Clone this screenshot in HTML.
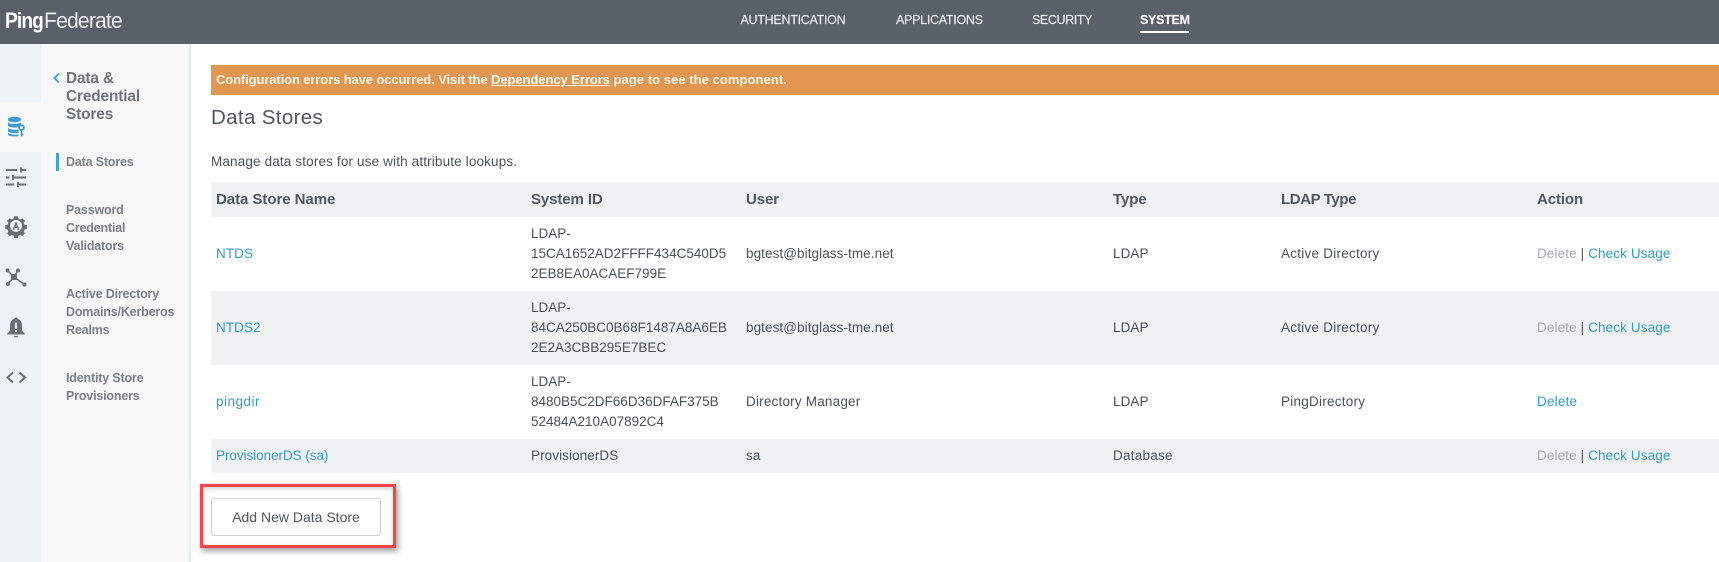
<!DOCTYPE html>
<html><head><meta charset="utf-8"><title>PingFederate Data Stores</title>
<style>
html,body{margin:0;padding:0;width:1719px;height:562px;overflow:hidden;background:#fff}
body{position:relative;font-family:"Liberation Sans",sans-serif;font-size:13.5px;color:#4b5158}
.a,.t{position:absolute;white-space:nowrap}
.t{line-height:20px;letter-spacing:.08px}
.id{letter-spacing:0}
.blk{position:absolute}
a{color:#2f9bd3;text-decoration:none}
.nav{color:#eceef0;font-size:12.5px;line-height:20px;top:10px;position:absolute;white-space:nowrap;letter-spacing:-.28px;-webkit-text-stroke:.15px #eceef0}
.side{color:#7b8087;font-weight:bold;font-size:12.5px;line-height:18px;position:absolute;left:66px;white-space:nowrap;letter-spacing:-.18px}
.h{font-weight:bold;color:#52575e;font-size:15px;top:190px;letter-spacing:-.1px}
.r{background:#f1f2f4;left:211px;width:1508px}
</style></head><body>
<div class="blk" style="left:0;top:0;width:1719px;height:44px;background:#596068"></div>
<div class="a" style="left:5px;top:5px;line-height:32px;font-size:22px;color:#fff;letter-spacing:-1px;transform:scaleX(.87);transform-origin:0 50%"><b>Ping</b></div>
<div class="a" style="left:44px;top:5px;line-height:32px;font-size:22.5px;color:#eceef0;letter-spacing:-.9px;transform:scaleX(.94);transform-origin:0 50%">Federate</div>
<div class="nav" style="left:740.5px">AUTHENTICATION</div>
<div class="nav" style="left:896px">APPLICATIONS</div>
<div class="nav" style="left:1032px;letter-spacing:-.4px">SECURITY</div>
<div class="nav" style="left:1140px;font-weight:bold;color:#fff">SYSTEM</div>
<div class="blk" style="left:1140px;top:31px;width:49px;height:2px;background:#fff"></div>

<div class="blk" style="left:0;top:44px;width:41px;height:518px;background:#eef3f8"></div>
<div class="blk" style="left:0;top:102px;width:41px;height:50px;background:#f8f8f8"></div>
<div class="blk" style="left:41px;top:44px;width:148px;height:518px;background:#f8f8f8"></div>
<div class="blk" style="left:189px;top:44px;width:2px;height:518px;background:#e7eaee"></div>

<svg class="blk" style="left:0;top:100px" width="41" height="300" viewBox="0 0 41 300">
<g fill="#3d9bd4"><ellipse cx="14.500" cy="19.500" rx="6.500" ry="2.800"/><path d="M8 22.500c2 2 11 2 13 0v3.500c-2 2-11 2-13 0z"/><path d="M8 28c2 2 8 2 10.500 1.500v3.500c-3 .5-8.500 0-10.500-1.500z"/><path d="M8 33c2 1.500 7 2 10.500 1.500v1.500c-3 .8-8.500.5-10.500-1z"/></g>
<circle cx="21.500" cy="27.500" r="2.400" fill="#f8f8f8" stroke="#3d9bd4" stroke-width="1.800"/><path d="M21.500 30V36.500M21.500 34.500h2" stroke="#3d9bd4" stroke-width="1.600" fill="none"/>
<g stroke="#696f76" stroke-width="1.900" fill="none"><path d="M6 70H17M21 67.500V72.500M21 70H26"/><path d="M6 77.500H9.500M13 75V80M13 77.500H26"/><path d="M6 84.500H14M18 82V87M18 84.500H26"/></g>
<g fill="#696f76" transform="translate(1.300 7.700) scale(.92)"><path fill-rule="evenodd" d="M14 118h4l.6 2.500 2 .9 2.300-1.300 2.800 2.800-1.300 2.300.9 2 2.500.6v4l-2.500.6-.9 2 1.300 2.300-2.800 2.800-2.300-1.300-2 .9-.6 2.500h-4l-.6-2.500-2-.9-2.300 1.300-2.800-2.800 1.300-2.300-.9-2-2.500-.6v-4l2.500-.6.9-2-1.300-2.300 2.800-2.800 2.300 1.300 2-.9zM16 122a6.500 6.500 0 1 0 .01 0z"/><path d="M16 123.500l3.800 9h-1.900l-.7-1.800h-2.500l-.7 1.800h-1.800zM15.500 129.200h1.200l-.6-1.800z"/></g>
<g stroke="#696f76" stroke-width="1.500" fill="#696f76"><path d="M14 177L7.500 170.500M14 177L18 170.500M14 177L8 184M14 177L24.500 184.500" fill="none"/><rect x="11" y="174" width="6" height="6" stroke="none"/><circle cx="7.500" cy="170.500" r="1.200"/><circle cx="18" cy="170.500" r="1.200"/><circle cx="8" cy="184" r="1.200"/><circle cx="24.500" cy="184.500" r="1.200"/></g>
<path fill="#696f76" d="M16 217.500a1.800 1.800 0 0 1 1.800 1.500c3 1 4.200 3.500 4.200 6.500v4c0 1.500 1 2.500 2.500 3.500v1.500h-17v-1.500c1.500-1 2.500-2 2.500-3.500v-4c0-3 1.200-5.500 4.200-6.500a1.800 1.800 0 0 1 1.800-1.500z"/>
<path d="M14 236h4a2 1.500 0 0 1-4 0z" fill="#696f76"/>
<rect x="15" y="222.500" width="2" height="6" fill="#eef3f8"/><rect x="15" y="230" width="2" height="2" fill="#eef3f8"/>
<g stroke="#696f76" stroke-width="2" fill="none"><path d="M13 272.500L7.500 277.500L13 282.500"/><path d="M19.500 272.500L25 277.500L19.500 282.500"/></g>
</svg>

<svg class="blk" style="left:52px;top:72px" width="10" height="12"><path d="M7 1.500L2.500 6l4.500 4.500" fill="none" stroke="#3b9dd6" stroke-width="1.800"/></svg>
<div class="a" style="left:66px;top:70px;font-size:15.300px;line-height:18px;font-weight:bold;color:#6f747b;letter-spacing:-.08px">Data &amp;<br>Credential<br>Stores</div>
<div class="blk" style="left:56px;top:153px;width:3px;height:18px;background:#3ea3dc"></div>
<div class="side" style="top:153px">Data Stores</div>
<div class="side" style="top:201px">Password<br>Credential<br>Validators</div>
<div class="side" style="top:285px">Active Directory<br>Domains/Kerberos<br>Realms</div>
<div class="side" style="top:369px">Identity Store<br>Provisioners</div>

<div class="blk" style="left:211px;top:65px;width:1508px;height:30px;background:#e29650"></div>
<div class="a" style="left:216px;top:70px;line-height:20px;font-size:13px;font-weight:bold;color:#fdf5ec;letter-spacing:-.11px">Configuration errors have occurred. Visit the <u style="color:#fff;letter-spacing:-.06px">Dependency Errors</u> <span style="letter-spacing:.06px">page to see the component.</span></div>
<div class="a" style="left:211px;top:105px;line-height:26px;font-size:20.500px;color:#50565d;letter-spacing:.35px">Data Stores</div>
<div class="t" style="left:211px;top:152px;letter-spacing:.15px">Manage data stores for use with attribute lookups.</div>

<div class="blk r" style="top:182px;height:35px"></div>
<div class="blk r" style="top:291px;height:74px"></div>
<div class="blk r" style="top:439px;height:34px"></div>

<div class="t h" style="left:216px;letter-spacing:-.05px">Data Store Name</div>
<div class="t h" style="left:531px">System ID</div>
<div class="t h" style="left:746px">User</div>
<div class="t h" style="left:1113px">Type</div>
<div class="t h" style="left:1281px;letter-spacing:-.4px">LDAP Type</div>
<div class="t h" style="left:1537px">Action</div>

<a class="t" style="left:216px;top:244px">NTDS</a>
<div class="t id" style="left:531px;top:224px">LDAP-<br>15CA1652AD2FFFF434C540D5<br>2EB8EA0ACAEF799E</div>
<div class="t" style="left:746px;top:244px">bgtest@bitglass-tme.net</div>
<div class="t" style="left:1113px;top:244px">LDAP</div>
<div class="t" style="left:1281px;top:244px;letter-spacing:.25px">Active Directory</div>
<div class="t" style="left:1537px;top:244px;letter-spacing:.12px"><span style="color:#a7aaae">Delete</span> | <a>Check Usage</a></div>

<a class="t" style="left:216px;top:318px">NTDS2</a>
<div class="t id" style="left:531px;top:298px">LDAP-<br>84CA250BC0B68F1487A8A6EB<br>2E2A3CBB295E7BEC</div>
<div class="t" style="left:746px;top:318px">bgtest@bitglass-tme.net</div>
<div class="t" style="left:1113px;top:318px">LDAP</div>
<div class="t" style="left:1281px;top:318px;letter-spacing:.25px">Active Directory</div>
<div class="t" style="left:1537px;top:318px;letter-spacing:.12px"><span style="color:#a7aaae">Delete</span> | <a>Check Usage</a></div>

<a class="t" style="left:216px;top:392px;letter-spacing:.5px">pingdir</a>
<div class="t id" style="left:531px;top:372px">LDAP-<br>8480B5C2DF66D36DFAF375B<br>52484A210A07892C4</div>
<div class="t" style="left:746px;top:392px;letter-spacing:.2px">Directory Manager</div>
<div class="t" style="left:1113px;top:392px">LDAP</div>
<div class="t" style="left:1281px;top:392px;letter-spacing:.25px">PingDirectory</div>
<a class="t" style="left:1537px;top:392px;letter-spacing:.2px">Delete</a>

<a class="t" style="left:216px;top:446px;letter-spacing:-.05px">ProvisionerDS (sa)</a>
<div class="t" style="left:531px;top:446px">ProvisionerDS</div>
<div class="t" style="left:746px;top:446px">sa</div>
<div class="t" style="left:1113px;top:446px;letter-spacing:.25px">Database</div>
<div class="t" style="left:1537px;top:446px;letter-spacing:.12px"><span style="color:#a7aaae">Delete</span> | <a>Check Usage</a></div>

<div class="blk" style="left:200px;top:484px;width:190px;height:58px;border:3px solid #f44548;box-shadow:2px 3px 6px rgba(0,0,0,.4), inset 0 2px 5px rgba(0,0,0,.18)"></div>
<div class="a" style="left:211px;top:498px;width:168px;height:36px;border:1px solid #cfd1d4;border-radius:3px;background:#fff;text-align:center;line-height:36px;font-size:14px;color:#50565d">Add New Data Store</div>
</body></html>
